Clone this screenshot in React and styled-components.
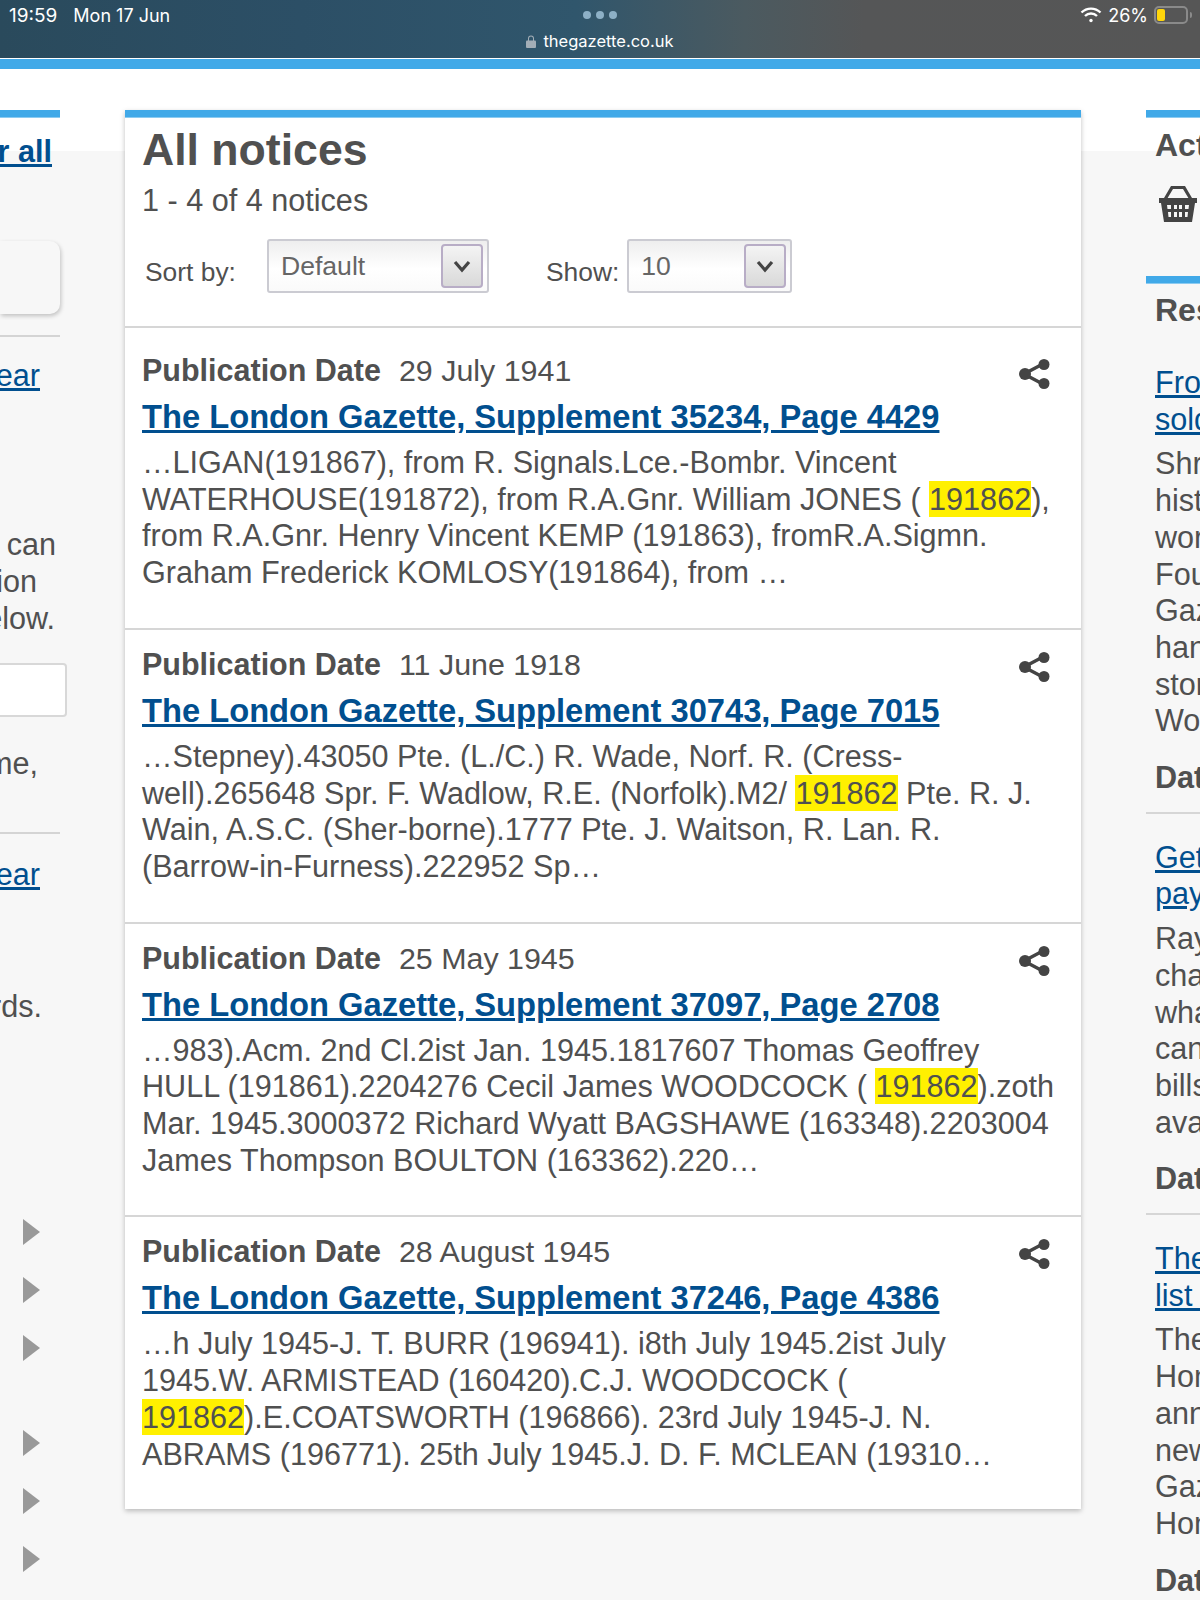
import React from 'react'
import styled, { createGlobalStyle } from 'styled-components'

const GlobalStyle = createGlobalStyle`
  html, body {
    margin: 0;
    height: 1600px;
    overflow: hidden;
  }

  body {
    background: #f7f7f7;
    color: #505050;
    font-family: "Liberation Sans", Arial, sans-serif;
  }
`

const Page = styled.div`
  display: flex;
  flex-direction: column;
  height: 1600px;
  overflow: hidden;
  width: 1200px;
`

const StatusBar = styled.header`
  background: linear-gradient(90deg, #2a4a5c 0%, #2c4f66 25%, #30566c 48%, #4b5a60 62%, #555657 72%, #565656 100%);
  color: #fff;
  display: grid;
  flex: none;
  font-family: Inter, "Liberation Sans", sans-serif;
  grid-template-columns: 1fr auto 1fr;
  grid-template-rows: 30px 28px;
  height: 58px;
`

const StatusLeft = styled.div`
  align-items: center;
  display: flex;
  font-size: 18px;
  gap: 16px;
  padding-left: 9px;
`

const StatusTime = styled.span`
  font-size: 19px;
`

const Dots = styled.div`
  align-items: center;
  display: flex;
  gap: 5px;
  justify-content: center;
`

const Dot = styled.span`
  background: #8db0c6;
  border-radius: 50%;
  height: 8px;
  width: 8px;
`

const StatusRight = styled.div`
  align-items: center;
  display: flex;
  font-size: 18px;
  gap: 6px;
  justify-content: flex-end;
  padding-right: 12px;
`

const Battery = styled.div`
  align-items: center;
  border: 2px solid #8a8a8a;
  border-radius: 5px;
  box-sizing: border-box;
  display: flex;
  height: 18px;
  padding: 1px;
  position: relative;
  width: 34px;

  &::after {
    background: #8a8a8a;
    border-radius: 0 2px 2px 0;
    content: '';
    height: 6px;
    position: absolute;
    right: -6px;
    width: 2px;
  }
`

const BatteryFill = styled.span`
  background: #ffd60a;
  border-radius: 2px;
  height: 100%;
  width: 8px;
`

const AddressBar = styled.div`
  align-items: center;
  display: flex;
  font-size: 16.5px;
  gap: 7px;
  grid-column: 2;
  justify-content: center;
  padding-bottom: 6px;
`

const TopStripe = styled.div`
  background: #41a9e8;
  border-top: 1px solid #fff;
  flex: none;
  height: 10px;
`

const Content = styled.main`
  background: linear-gradient(#fff 82px, #f7f7f7 82px);
  display: flex;
  flex: 1;
  gap: 65px;
  padding-top: 41px;
`

const LeftColumn = styled.aside`
  display: flex;
  flex: none;
  flex-direction: column;
  font-size: 30.6px;
  width: 60px;
`

const RightColumn = styled.aside`
  flex: none;
  font-size: 30.6px;
  overflow: hidden;
  width: 54px;
`

const BlueBar = styled.div`
  background: #41a9e8;
  border-bottom: 1px solid #8ccbf1;
  box-sizing: border-box;
  height: 8px;
  margin-top: ${({ $top }) => $top || 0}px;
`

const SideLine = styled.div`
  display: flex;
  justify-content: flex-end;
  line-height: 36.7px;
  margin-top: ${({ $top }) => $top || 0}px;
  padding-right: ${({ $end }) => $end}px;
  white-space: nowrap;
`

const SideLink = styled.a`
  color: #014f8f;
  font-weight: ${({ $bold }) => ($bold ? 700 : 400)};
  text-decoration: underline;
`

const FilterBox = styled.div`
  background: #f7f7f7;
  border-radius: 0 10px 10px 0;
  box-shadow: 1px 2px 4px rgba(0, 0, 0, 0.22);
  height: 73px;
  margin-top: 71px;
`

const SideRule = styled.div`
  background: #d4d4d4;
  height: 2px;
  margin-top: ${({ $top }) => $top}px;
`

const SearchInput = styled.div`
  background: #fff;
  border: 2px solid #d8d8d8;
  border-left: 0;
  border-radius: 0 4px 4px 0;
  box-sizing: border-box;
  height: 54px;
  margin-right: -7px;
  margin-top: 26px;
`

const Arrow = styled.span`
  border-bottom: 13px solid transparent;
  border-left: 17px solid #999;
  border-top: 13px solid transparent;
  display: block;
  height: 0;
  margin-left: 23px;
  margin-top: ${({ $top }) => $top}px;
  width: 0;
`

const Card = styled.section`
  align-self: flex-start;
  background: #fff;
  box-shadow: 0 2px 5px rgba(0, 0, 0, 0.25);
  flex: none;
  width: 956px;
`

const CardHeader = styled.div`
  padding: 8px 17px 33px;
`

const Title = styled.h1`
  font-size: 44.6px;
  font-weight: 700;
  line-height: 48px;
  margin: 0;
`

const ResultCount = styled.p`
  font-size: 30.6px;
  line-height: 36px;
  margin: 8px 0 0;
`

const Controls = styled.div`
  display: flex;
  margin-top: 21px;
  padding-left: 3px;
`

const ControlLabel = styled.label`
  font-size: 26.4px;
  line-height: 30px;
  margin-left: ${({ $left }) => $left || 0}px;
  margin-right: ${({ $right }) => $right}px;
  padding-top: 18px;
`

const SelectBox = styled.div`
  align-items: center;
  background: linear-gradient(#eeeeee, #fff 55%, #fafafa);
  border: 2px solid #cbcbd2;
  border-radius: 3px;
  box-sizing: border-box;
  color: #666;
  display: flex;
  font-size: 26.6px;
  height: 54px;
  justify-content: space-between;
  padding: 0 4px 0 12px;
  width: ${({ $width }) => $width}px;
`

const SelectButton = styled.span`
  align-items: center;
  background: linear-gradient(#f4f4f4, #d9d9d9);
  border: 2px solid #b8adc6;
  border-radius: 4px;
  box-sizing: border-box;
  display: flex;
  height: 44px;
  justify-content: center;
  width: 42px;
`

const Notice = styled.article`
  border-top: 2px solid #d6d6d6;
  padding: ${({ $first }) => ($first ? 24 : 16)}px 0 37px 17px;
  position: relative;
`

const PublicationLine = styled.div`
  font-size: 30.4px;
  line-height: 36px;
`

const PublicationLabel = styled.strong`
  font-size: 30.5px;
  margin-right: 18px;
`

const NoticeLink = styled.a`
  color: #014f8f;
  display: block;
  font-size: 32.7px;
  font-weight: 700;
  line-height: 38px;
  margin-top: 10px;
  text-decoration: underline;
`

const Excerpt = styled.div`
  font-size: 30.6px;
  line-height: 36.7px;
  margin-top: 8px;
`

const ExcerptLine = styled.div`
  white-space: nowrap;
`

const Highlight = styled.mark`
  background: #fff000;
  color: inherit;
  padding: 1px 0;
`

const ShareIcon = styled.svg`
  fill: #444;
  height: 30px;
  position: absolute;
  right: 31px;
  top: ${({ $first }) => ($first ? 31 : 22)}px;
  width: 31px;
`

const SideHeading = styled.div`
  font-size: 32px;
  font-weight: 700;
  line-height: 38px;
  margin-top: ${({ $top }) => $top}px;
  padding-left: 9px;
  white-space: nowrap;
`

const BasketIcon = styled.svg`
  display: block;
  fill: #444;
  height: 38px;
  margin: 21px 0 0 12px;
  width: 40px;
`

const Resource = styled.div`
  border-bottom: ${({ $last }) => ($last ? 0 : '2px solid #d6d6d6')};
  line-height: 36.7px;
  padding: 0 0 16px 9px;
  white-space: nowrap;
`

const ResourceTitle = styled.a`
  color: #014f8f;
  display: block;
  margin-bottom: 8px;
  padding-top: ${({ $top }) => $top}px;
  text-decoration: underline;
`

const ResourceDate = styled.div`
  font-weight: 700;
  margin-top: 20px;
`

const notices = [
  {
    date: '29 July 1941',
    title: 'The London Gazette, Supplement 35234, Page 4429',
    lines: [
      '…LIGAN(191867), from R. Signals.Lce.-Bombr. Vincent',
      'WATERHOUSE(191872), from R.A.Gnr. William JONES ( 191862),',
      'from R.A.Gnr. Henry Vincent KEMP (191863), fromR.A.Sigmn.',
      'Graham Frederick KOMLOSY(191864), from …',
    ],
  },
  {
    date: '11 June 1918',
    title: 'The London Gazette, Supplement 30743, Page 7015',
    lines: [
      '…Stepney).43050 Pte. (L./C.) R. Wade, Norf. R. (Cress-',
      'well).265648 Spr. F. Wadlow, R.E. (Norfolk).M2/ 191862 Pte. R. J.',
      'Wain, A.S.C. (Sher-borne).1777 Pte. J. Waitson, R. Lan. R.',
      '(Barrow-in-Furness).222952 Sp…',
    ],
  },
  {
    date: '25 May 1945',
    title: 'The London Gazette, Supplement 37097, Page 2708',
    lines: [
      '…983).Acm. 2nd Cl.2ist Jan. 1945.1817607 Thomas Geoffrey',
      'HULL (191861).2204276 Cecil James WOODCOCK ( 191862).zoth',
      'Mar. 1945.3000372 Richard Wyatt BAGSHAWE (163348).2203004',
      'James Thompson BOULTON (163362).220…',
    ],
  },
  {
    date: '28 August 1945',
    title: 'The London Gazette, Supplement 37246, Page 4386',
    lines: [
      '…h July 1945-J. T. BURR (196941). i8th July 1945.2ist July',
      '1945.W. ARMISTEAD (160420).C.J. WOODCOCK (',
      '191862).E.COATSWORTH (196866). 23rd July 1945-J. N.',
      'ABRAMS (196771). 25th July 1945.J. D. F. MCLEAN (19310…',
    ],
  },
]

const resources = [
  {
    title: ['From', 'soldier'],
    lines: ['Shrouded', 'history', 'world', 'Found', 'Gazette', 'hand', 'story', 'World'],
    top: 35,
  },
  {
    title: ['Get', 'pay'],
    lines: ['Ray', 'charges', 'what', 'can', 'bills', 'available'],
    top: 25,
  },
  {
    title: ['The', 'list of'],
    lines: ['The', 'Home', 'announces', 'new', 'Gazette', 'Home'],
    top: 25,
  },
]

const Marked = ({ text }) =>
  text.split(/(191862)/).map((part, i) =>
    part === '191862' ? <Highlight key={i}>{part}</Highlight> : part,
  )

const Share = ({ first }) => (
  <ShareIcon $first={first} viewBox="0 0 31 30">
    <path d="M6 12.6 23 3.6l1.6 3L7.6 15.6zM7.6 14.4l17 9-1.6 3-17-9z" />
    <circle cx="6" cy="15" r="6" />
    <circle cx="25" cy="5.5" r="5.5" />
    <circle cx="25" cy="24.5" r="5.5" />
  </ShareIcon>
)

const Chevron = () => (
  <svg width="20" height="13" viewBox="0 0 20 13" fill="none" stroke="#444" strokeWidth="3.200">
    <path d="M3 2l7 8 7-8" />
  </svg>
)

const Basket = () => (
  <BasketIcon viewBox="0 0 40 38">
    <path d="M13 1h14l7 12h-3.6L25 4H15L9.600 13H6z" />
    <path
      fillRule="evenodd"
      d="M1 13h38v5h-2l-3 19H6L3 18H1zM9 20l.5 4h3.500v-4zm7 0v4h3v-4zm5 0v4h3v-4zm6 0v4h3.500l.5-4zM10 27l.5 5H13v-5zm6 0v5h3v-5zm5 0v5h3v-5zm6 0v5h2.500l.5-5z"
    />
  </BasketIcon>
)

const App = () => (
  <Page>
    <GlobalStyle />
    <StatusBar>
      <StatusLeft>
        <StatusTime>19:59</StatusTime>
        <span>Mon 17 Jun</span>
      </StatusLeft>
      <Dots>
        <Dot />
        <Dot />
        <Dot />
      </Dots>
      <StatusRight>
        <svg width="22" height="16" viewBox="0 0 22 16" fill="none" stroke="#fff" strokeWidth="2.400">
          <path d="M1.500 5.500a13.500 13.500 0 0 1 19 0" />
          <path d="M5 9a8.500 8.500 0 0 1 12 0" />
          <circle cx="11" cy="13.500" r="1.700" fill="#fff" stroke="none" />
        </svg>
        <span>26%</span>
        <Battery>
          <BatteryFill />
        </Battery>
      </StatusRight>
      <AddressBar>
        <svg width="10" height="13" viewBox="0 0 10 13" fill="#a3aeb7">
          <path d="M2 6V3.500a3 3 0 0 1 6 0V6H7V3.500a2 2 0 0 0-4 0V6z" />
          <rect x="0" y="5.500" width="10" height="7.500" rx="1" />
        </svg>
        thegazette.co.uk
      </AddressBar>
    </StatusBar>
    <TopStripe />
    <Content>
      <LeftColumn>
        <BlueBar />
        <SideLine $top={15} $end={8}>
          <SideLink $bold href="#clear">Clear all</SideLink>
        </SideLine>
        <FilterBox />
        <SideRule $top={21} />
        <SideLine $top={20} $end={20}>
          <SideLink href="#clear">Clear</SideLink>
        </SideLine>
        <SideLine $top={133} $end={4}>can</SideLine>
        <SideLine $end={23}>ion</SideLine>
        <SideLine $end={5}>below.</SideLine>
        <SearchInput />
        <SideLine $top={28} $end={22}>name,</SideLine>
        <SideRule $top={51} />
        <SideLine $top={22} $end={20}>
          <SideLink href="#clear">Clear</SideLink>
        </SideLine>
        <SideLine $top={95} $end={18}>words.</SideLine>
        <Arrow $top={194} />
        <Arrow $top={32} />
        <Arrow $top={32} />
        <Arrow $top={69} />
        <Arrow $top={32} />
        <Arrow $top={32} />
      </LeftColumn>
      <Card>
        <BlueBar />
        <CardHeader>
          <Title>All notices</Title>
          <ResultCount>1 - 4 of 4 notices</ResultCount>
          <Controls>
            <ControlLabel $right={31}>Sort by:</ControlLabel>
            <SelectBox $width={222}>
              Default
              <SelectButton>
                <Chevron />
              </SelectButton>
            </SelectBox>
            <ControlLabel $left={57} $right={8}>Show:</ControlLabel>
            <SelectBox $width={165}>
              10
              <SelectButton>
                <Chevron />
              </SelectButton>
            </SelectBox>
          </Controls>
        </CardHeader>
        {notices.map((notice, i) => (
          <Notice key={notice.title} $first={i === 0}>
            <Share first={i === 0} />
            <PublicationLine>
              <PublicationLabel>Publication Date</PublicationLabel>
              {notice.date}
            </PublicationLine>
            <NoticeLink href="#notice">{notice.title}</NoticeLink>
            <Excerpt>
              {notice.lines.map(line => (
                <ExcerptLine key={line}>
                  <Marked text={line} />
                </ExcerptLine>
              ))}
            </Excerpt>
          </Notice>
        ))}
      </Card>
      <RightColumn>
        <BlueBar />
        <SideHeading $top={8}>Actions</SideHeading>
        <Basket />
        <BlueBar $top={53} />
        <SideHeading $top={7}>Resources</SideHeading>
        {resources.map((resource, i) => (
          <Resource key={resource.title[0]} $last={i === resources.length - 1}>
            <ResourceTitle $top={resource.top} href="#resource">
              {resource.title[0]}
              <br />
              {resource.title[1]}
            </ResourceTitle>
            {resource.lines.map(line => (
              <div key={line}>{line}</div>
            ))}
            <ResourceDate>Date</ResourceDate>
          </Resource>
        ))}
      </RightColumn>
    </Content>
  </Page>
)

export default App
